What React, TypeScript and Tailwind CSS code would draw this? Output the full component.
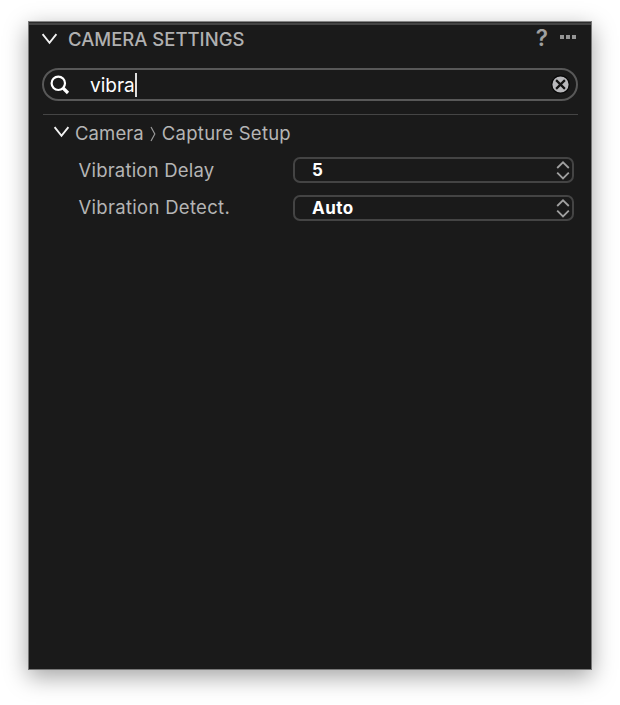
import React from "react";

function Chevron() {
  return (
    <svg width="17" height="12" viewBox="0 0 17 12" fill="none" stroke="#f2f2f2" strokeWidth="1.9" className="shrink-0">
      <path d="M1.6 1.2 L8.5 9.8 L15.4 1.2" />
    </svg>
  );
}

function Stepper() {
  return (
    <svg width="14" height="19" viewBox="0 0 14 19" fill="none" stroke="#a0a0a0" strokeWidth="1.8" className="mt-px">
      <path d="M1.2 7 L7 1.3 L12.8 7 M1.2 11.7 L7 17.5 L12.8 11.7" />
    </svg>
  );
}

function Field({ label, value, labelClass, valueClass }: { label: string; value: string; labelClass: string; valueClass: string }) {
  return (
    <div className="flex h-[26px] items-center pl-[49.5px] pr-[17px]">
      <div className={`w-[214.5px] shrink-0 whitespace-nowrap text-[18.5px] text-[#b5b5b5] ${labelClass}`}>{label}</div>
      <div className="flex h-[26px] flex-1 items-center justify-between rounded-[7px] border-2 border-[#444444] pl-[17px] pr-[2px]">
        <span className={`text-[17px] font-bold leading-[22px] text-white ${valueClass}`}>{value}</span>
        <Stepper />
      </div>
    </div>
  );
}

export default function App() {
  return (
    <div className="h-[705px] w-[620px] overflow-hidden bg-white pl-7 pt-[21px] font-['Inter','Liberation_Sans',sans-serif]">
      <div className="h-[649px] w-[564px] border border-[#777777] border-t-[#858585] bg-[#1a1a1a] shadow-[0_7px_22px_rgba(0,0,0,0.36)]">
        <div className="h-[3px] border-t border-[#2c2c2c] bg-[#444444]" />
        <header className="flex h-7 items-center pl-3 pr-[15px]">
          <Chevron />
          <h1 className="ml-[10px] flex-1 whitespace-nowrap text-[18.5px] font-medium leading-7 tracking-[0px] text-[#b0b0b0]">CAMERA SETTINGS</h1>
          <span className="mb-0.5 mr-3 text-[22.5px] font-semibold leading-[26px] text-[#a0a0a0]">?</span>
          <span className="mb-[5px] flex gap-[2px]">
            <i className="size-1 bg-[#969696]" />
            <i className="size-1 bg-[#969696]" />
            <i className="size-1 bg-[#969696]" />
          </span>
        </header>
        <div className="ml-[13px] mt-[15px] flex h-[33px] w-[536px] items-center rounded-full border-2 border-[#585858] pl-[6px] pr-[5px]">
          <svg width="20" height="20" viewBox="0 0 20 20" fill="none" stroke="#fff">
            <circle cx="8.3" cy="8.3" r="6.7" strokeWidth="2.2" />
            <path d="M13 13 L18 18" strokeWidth="3.2" />
          </svg>
          <div className="ml-5 flex flex-1 items-center">
            <span className="pt-[2px] text-[19px] leading-7 tracking-[0px] text-white">vibra</span>
            <i className="h-6 w-[2px] bg-[#dddddd]" />
          </div>
          <svg width="20" height="20" viewBox="0 0 20 20" fill="none">
            <circle cx="9.5" cy="9.5" r="8.8" fill="#b8b8bb" stroke="#080808" strokeWidth="1.4" />
            <path d="M5.1 5.1 L13.9 13.9 M13.9 5.1 L5.1 13.9" stroke="#111" strokeWidth="2.2" />
          </svg>
        </div>
        <div className="ml-[14px] mr-[13px] mt-[13px] h-px bg-[#454545]" />
        <div className="flex h-[35px] items-center whitespace-nowrap pl-6 text-[18.5px] leading-7 text-[#b5b5b5]">
          <span className="mb-[2px]"><Chevron /></span>
          <span className="ml-[5px] tracking-[0.1px]">Camera</span>
          <svg width="6" height="16" viewBox="0 0 6 16" fill="none" stroke="#999" strokeWidth="1.2" className="ml-[6px] mr-[6px] mt-[2px]">
            <path d="M1 1 L4.8 8 L1 15" />
          </svg>
          <span className="tracking-[0.25px]">Capture Setup</span>
        </div>
        <div className="mt-[7px] flex flex-col gap-3">
          <Field label="Vibration Delay" value="5" labelClass="leading-[26px] tracking-[0.2px]" valueClass="tracking-[0.5px]" />
          <Field label="Vibration Detect." value="Auto" labelClass="pb-[2px] leading-[24px] tracking-[0.3px]" valueClass="tracking-[0.5px]" />
        </div>
      </div>
    </div>
  );
}
